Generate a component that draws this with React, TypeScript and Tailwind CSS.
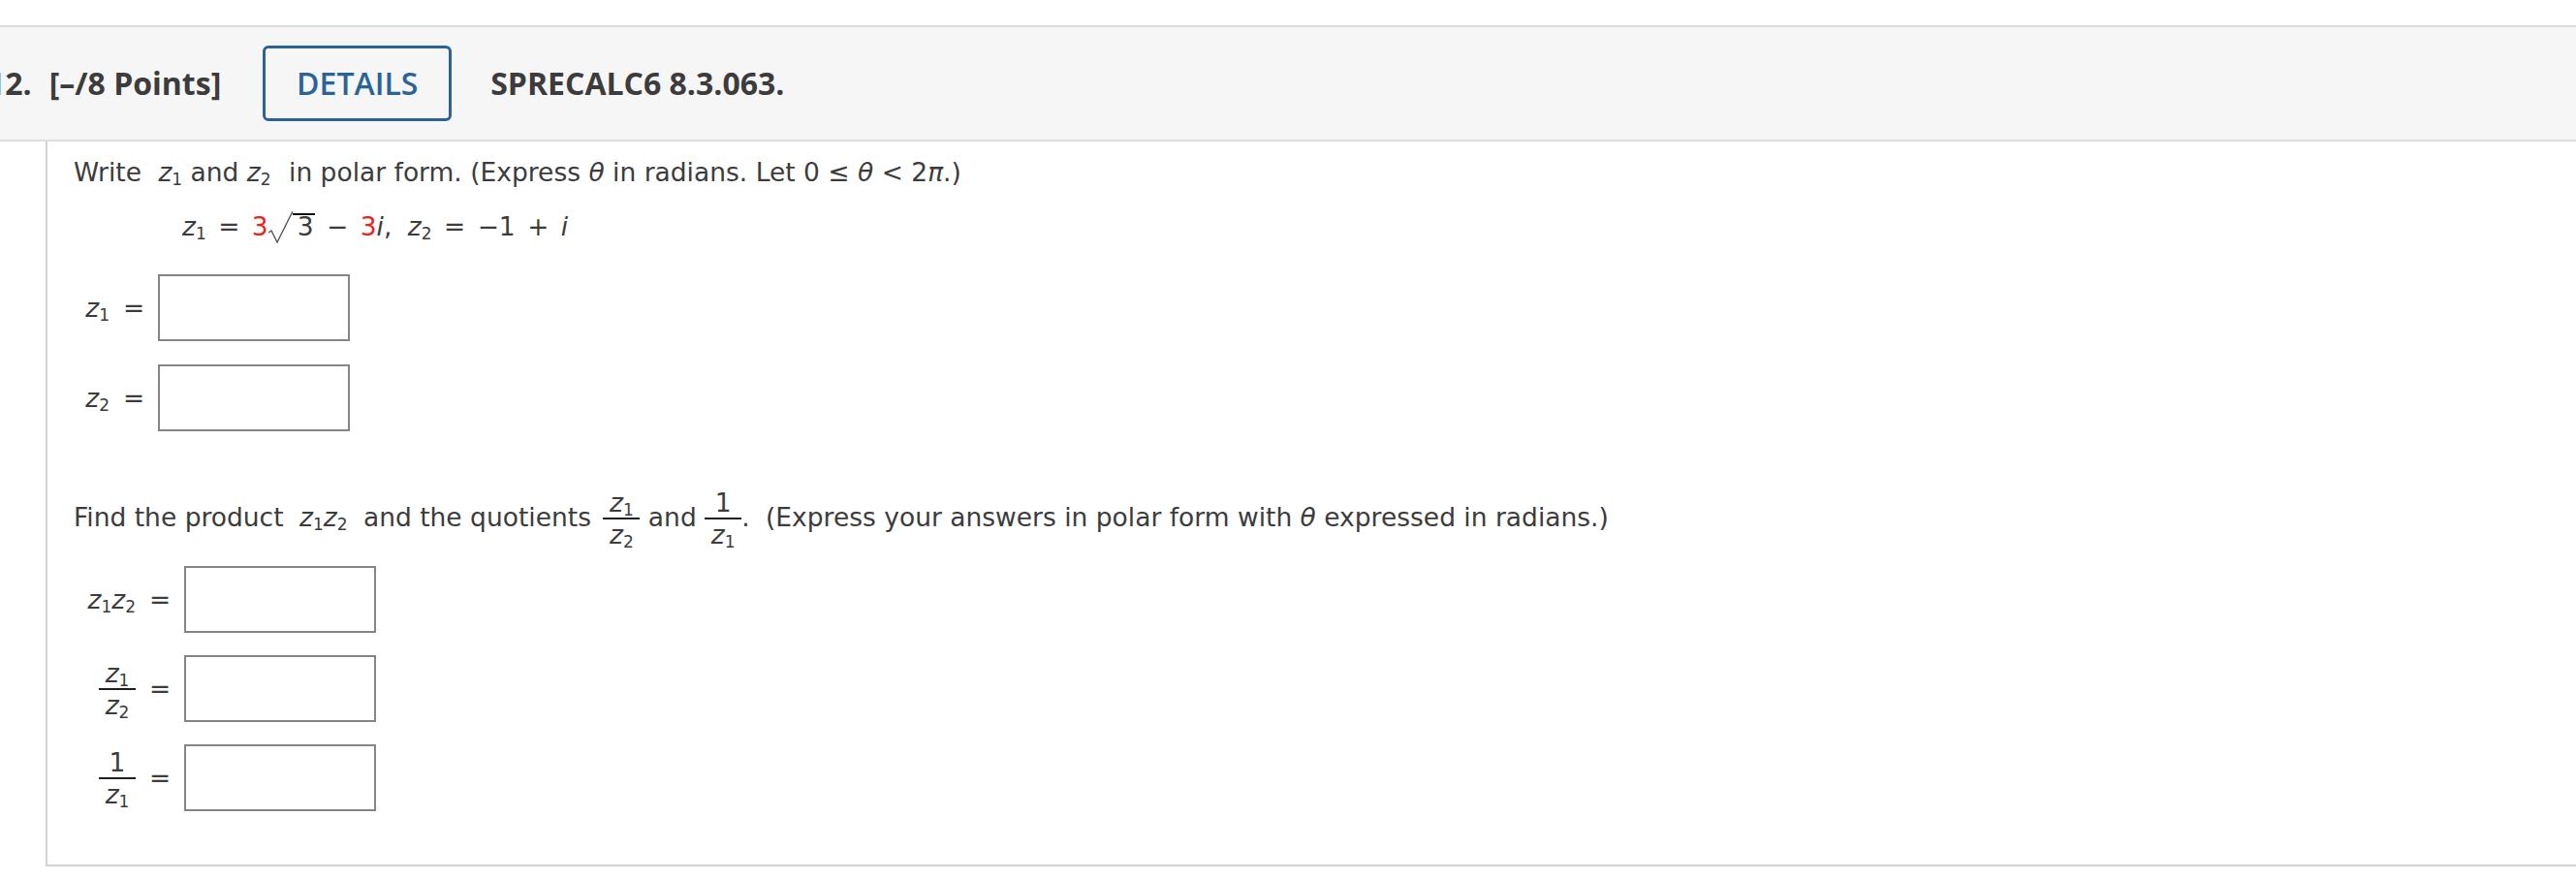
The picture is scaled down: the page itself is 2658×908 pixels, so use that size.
import type { ReactNode } from "react";

function Z({ n }: { n: string }) {
  return (
    <span className="whitespace-nowrap">
      <i>z</i>
      <sub className="text-[17px]">{n}</sub>
    </span>
  );
}

function Frac({ top, bottom }: { top: ReactNode; bottom: ReactNode }) {
  return (
    <span className="inline-flex flex-col items-center align-middle">
      <span className="leading-[31px]">{top}</span>
      <span className="h-[2px] w-[38px] bg-[#1e1e1e]" />
      <span className="leading-[31px]">{bottom}</span>
    </span>
  );
}

function Sqrt({ children }: { children: ReactNode }) {
  return (
    <span className="whitespace-nowrap">
      <svg width="25" height="34" viewBox="0 0 25 34" className="inline-block align-[-8px]">
        <path d="M0 23 L3 21 L9 33 L25 1" fill="none" stroke="#555" strokeWidth="1.4" />
      </svg>
      <span className="inline-block border-t-2 border-[#111] leading-[24px] pl-[5px] pr-[1px]">
        {children}
      </span>
    </span>
  );
}

function AnswerBox() {
  return <div className="w-[198px] h-[69px] border-2 border-[#858585] bg-white" />;
}

function Row({ label, labelWidth }: { label: ReactNode; labelWidth: string }) {
  return (
    <div className="flex items-center gap-[14px] ml-[10px]">
      <span className={`${labelWidth} flex justify-end`}>{label}</span>
      <span>=</span>
      <AnswerBox />
    </div>
  );
}

export default function App() {
  return (
    <div className="w-full min-h-screen bg-white overflow-hidden">
      {/* Question header */}
      <div className="mt-[26px] h-[120px] border-y-2 border-[#dddddd] bg-[#f6f6f6] flex items-center font-['Open_Sans',sans-serif] text-[32px] font-bold text-[#3c3c3c] whitespace-nowrap">
        <span className="-ml-[13px]">12.</span>
        <span className="ml-[18px]">[–/8 Points]</span>
        <button className="ml-[43px] w-[195px] h-[78px] border-[3px] border-[#2a6496] rounded-[6px] text-[#2a6496] font-semibold text-[32px]">
          DETAILS
        </button>
        <span className="ml-[40px]">SPRECALC6 8.3.063.</span>
      </div>

      {/* Question body */}
      <div className="ml-[47px] border-l-2 border-b-2 border-[#d3d3d3] pl-[27px] pt-[14px] pb-[55px] font-['DejaVu_Sans',Verdana,sans-serif] text-[26.5px] leading-[36px] text-[#3c3c3c]">
        <p className="whitespace-nowrap">
          Write <span className="ml-[9px]"><Z n="1" /></span> and <span className="mr-[10px]"><Z n="2" /></span> in polar form. (Express <i>θ</i> in radians. Let 0 ≤ <i>θ</i> &lt; 2<i>π</i>.)
        </p>

        <p className="mt-[20px] ml-[112px] whitespace-nowrap">
          <Z n="1" /> <span className="mx-[4px]">=</span> <span className="text-[#e8261c]">3</span>
          <Sqrt>3</Sqrt> <span className="mx-[4px]">−</span> <span className="text-[#e8261c]">3</span>
          <i>i</i>, <span className="ml-[8px]"><Z n="2" /></span> <span className="mx-[4px]">=</span> −1 <span className="mx-[4px]">+</span> <i>i</i>
        </p>

        <div className="mt-[31px] flex flex-col gap-[24px]">
          <Row label={<Z n="1" />} labelWidth="w-[27px]" />
          <Row label={<Z n="2" />} labelWidth="w-[27px]" />
        </div>

        <p className="mt-[58px] whitespace-nowrap">
          Find the product <span className="ml-[8px] mr-[8px]"><Z n="1" /><Z n="2" /></span> and the quotients{" "}
          <span className="ml-[4px]"><Frac top={<Z n="1" />} bottom={<Z n="2" />} /></span> and{" "}
          <Frac top="1" bottom={<Z n="1" />} />.{" "}
          <span className="ml-[8px]">(Express your answers in polar form with <i>θ</i> expressed in radians.)</span>
        </p>

        <div className="mt-[17px] flex flex-col gap-[23px]">
          <Row label={<span><Z n="1" /><Z n="2" /></span>} labelWidth="w-[54px]" />
          <Row label={<Frac top={<Z n="1" />} bottom={<Z n="2" />} />} labelWidth="w-[54px]" />
          <Row label={<Frac top="1" bottom={<Z n="1" />} />} labelWidth="w-[54px]" />
        </div>
      </div>
    </div>
  );
}
